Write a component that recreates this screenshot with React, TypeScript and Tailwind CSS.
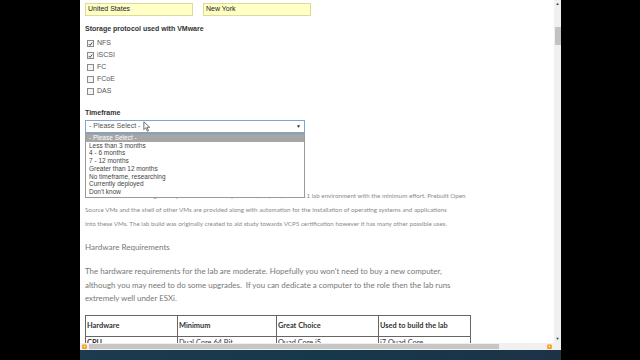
import React from 'react'

const PROTOCOLS: { label: string; checked: boolean }[] = [
  { label: 'NFS', checked: true },
  { label: 'iSCSI', checked: true },
  { label: 'FC', checked: false },
  { label: 'FCoE', checked: false },
  { label: 'DAS', checked: false },
]

const TIMEFRAMES = [
  'Less than 3 months',
  '4 - 6 months',
  '7 - 12 months',
  'Greater than 12 months',
  'No timeframe, researching',
  'Currently deployed',
  "Don't know",
]

const INTRO = [
  'This lab builder kit is designed to produce a nested vSphere 6.0, 5.5, 5.1, 5.0 or 4.1 lab environment with the minimum effort. Prebuilt Open',
  'Source VMs and the shell of other VMs are provided along with automation for the installation of operating systems and applications',
  'into these VMs. The lab build was originally created to aid study towards VCP5 certification however it has many other possible uses.',
]

function CheckBox({ checked }: { checked: boolean }) {
  return (
    <span className="flex h-[7px] w-[7px] items-center justify-center border border-[#8a8a8a] bg-[#f4f4f4]">
      {checked && (
        <svg viewBox="0 0 8 8" className="h-[6px] w-[6px]">
          <path d="M1.2 4.2 L3.2 6.2 L6.8 1.6" fill="none" stroke="#333" strokeWidth={1.4} />
        </svg>
      )}
    </span>
  )
}

export default function App() {
  return (
    <div className="flex h-[360px] w-[640px] overflow-hidden bg-black">
      <div className="w-[80px] shrink-0 bg-black" />
      <div className="flex w-[481px] shrink-0 flex-col">
        <div className="flex h-[343px] shrink-0">
          <div className="relative flex-1 overflow-hidden bg-white pl-[5px] pt-[3px]" style={{ fontFamily: '"Liberation Sans", Arial, sans-serif' }}>
            <div className="flex gap-[10px]">
              <div className="flex h-[13px] w-[108px] items-center border border-[#dcdc9a] bg-[#ffffc6] px-[2px] text-[7px] text-[#222]">United States</div>
              <div className="flex h-[13px] w-[108px] items-center border border-[#dcdc9a] bg-[#ffffc6] px-[2px] text-[7px] text-[#222]">New York</div>
            </div>

            <div className="mt-[8px] text-[7px] font-bold text-[#333]">Storage protocol used with VMware</div>
            <div className="mt-[5px] flex flex-col gap-[4px] pl-[2px]">
              {PROTOCOLS.map((p) => (
                <div key={p.label} className="flex h-[8px] items-center gap-[3px] text-[7px] text-[#555]">
                  <CheckBox checked={p.checked} />
                  {p.label}
                </div>
              ))}
            </div>

            <div className="mt-[12px] text-[7px] font-bold text-[#333]">Timeframe</div>
            <div className="relative mt-[2px] w-[220px]">
              <div className="flex h-[13px] items-center justify-between border border-[#7ea6d3] bg-white px-[3px] text-[7px] text-[#555]">
                <span>- Please Select -</span>
                <span className="text-[5px] text-[#333]">▼</span>
              </div>
              <div className="absolute left-0 top-[13px] z-10 w-[220px] border border-[#9a9a9a] bg-white pb-[1px] text-[6.5px] leading-[7.7px] text-[#444]">
                <div className="bg-[#a6a6a6] px-[3px] text-white">- Please Select -</div>
                {TIMEFRAMES.map((t) => (
                  <div key={t} className="px-[3px]">{t}</div>
                ))}
              </div>
              <svg viewBox="0 0 10 14" className="absolute left-[58px] top-[1px] z-20 h-[11px] w-[8px]">
                <path d="M1 1 L1 11 L3.5 8.5 L5.5 13 L7 12.3 L5 8 L8.5 8 Z" fill="#fff" stroke="#222" strokeWidth={0.8} />
              </svg>
            </div>

            <div className="mt-[56px] pr-[10px] text-[#8a8a8a]" style={{ fontFamily: 'Lato, "Open Sans", sans-serif' }}>
              <div className="flex flex-col text-[6.25px] leading-[14px]">
                {INTRO.map((l) => (
                  <div key={l} className="whitespace-nowrap">{l}</div>
                ))}
              </div>
              <div className="mt-[10px] text-[8px] leading-[12px] text-[#777]">Hardware Requirements</div>
              <div className="mt-[12px] text-[7.9px] leading-[13.5px] text-[#777]">
                <div className="whitespace-nowrap">The hardware requirements for the lab are moderate. Hopefully you won't need to buy a new computer,</div>
                <div className="whitespace-nowrap">although you may need to do some upgrades.&nbsp; If you can dedicate a computer to the role then the lab runs</div>
                <div className="whitespace-nowrap">extremely well under ESXi.</div>
              </div>
              <table className="mt-[9px] w-[386px] border-collapse text-[7.4px] text-[#333]">
                <thead>
                  <tr className="h-[21px]">
                    <th className="w-[92px] border border-[#666] px-[1px] text-left font-bold">Hardware</th>
                    <th className="w-[99px] border border-[#666] px-[1px] text-left font-bold">Minimum</th>
                    <th className="w-[102px] border border-[#666] px-[1px] text-left font-bold">Great Choice</th>
                    <th className="border border-[#666] px-[1px] text-left font-bold">Used to build the lab</th>
                  </tr>
                </thead>
                <tbody>
                  <tr className="h-[21px] align-top">
                    <td className="border border-[#666] px-[1px] font-bold">CPU</td>
                    <td className="border border-[#666] px-[1px]">Dual Core 64 Bit</td>
                    <td className="border border-[#666] px-[1px]">Quad Core i5</td>
                    <td className="border border-[#666] px-[1px]">i7 Quad Core</td>
                  </tr>
                </tbody>
              </table>
            </div>
          </div>
          <div className="flex w-[7px] shrink-0 flex-col items-center bg-[#f0f0f0]">
            <span className="mt-[2px] text-[4px] leading-[4px] text-[#333]">▲</span>
            <div className="mt-[21px] h-[18px] w-[6px] bg-[#c2c2c2]" />
            <div className="flex-1" />
            <span className="mb-[2px] text-[4px] leading-[4px] text-[#333]">▼</span>
          </div>
        </div>
        <div className="flex h-[7px] shrink-0 items-center bg-[#f0f0f0]">
          <span className="ml-[2px] text-[4px] leading-[4px] text-[#333]">◀</span>
          <div className="ml-[2px] h-[5px] w-[410px] bg-[#c6c6c6]" />
          <div className="flex-1" />
          <span className="mr-[9px] text-[4px] leading-[4px] text-[#333]">▶</span>
        </div>
        <div className="flex-1 bg-gradient-to-r from-[#1d3a4e] via-[#16394a] to-[#1c3346]" />
      </div>
      <div className="flex-1 bg-black" />
    </div>
  )
}
